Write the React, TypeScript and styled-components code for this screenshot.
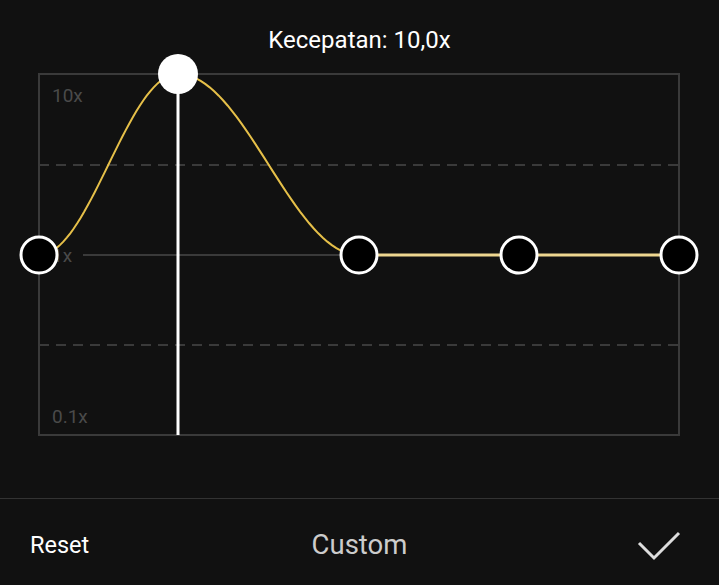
import React from "react";
import styled, { createGlobalStyle } from "styled-components";

const GlobalStyle = createGlobalStyle`
  html, body {
    margin: 0;
    padding: 0;
    background: #111111;
  }
  body {
    font-family: Roboto, "Liberation Sans", sans-serif;
    overflow: hidden;
  }
`;

const Screen = styled.div`
  width: 719px;
  height: 585px;
  display: flex;
  flex-direction: column;
  background: #111111;
`;

const Title = styled.div`
  height: 80px;
  display: flex;
  align-items: center;
  justify-content: center;
  color: #ffffff;
  font-size: 24px;
  position: relative;
  z-index: 1;
`;

const Chart = styled.svg`
  display: block;
  width: 719px;
  height: 418px;
  overflow: visible;
`;

const Divider = styled.div`
  height: 1px;
  background: #333333;
`;

const Footer = styled.div`
  flex: 1;
  display: grid;
  grid-template-columns: 1fr auto 1fr;
  align-items: center;
  padding: 5px 30px 0 30px;
`;

const ResetButton = styled.span`
  color: #ffffff;
  font-size: 23.5px;
`;

const PresetName = styled.span`
  color: #cccccc;
  font-size: 27.5px;
`;

const ConfirmButton = styled.span`
  justify-self: end;
  display: flex;
  margin: 2px 8px 0 0;
`;

const GRID = "#3a3a3a";
const LABEL = "#4a4a4a";
const CURVE = "#e6c049";
const FLAT = "#eed690";

const left = 39;
const right = 679;
const top = 74;
const bottom = 435;
const mid = 255;

// smooth cosine half-wave between two points
const wave = (x0: number, y0: number, x1: number, y1: number) => {
  const pts: string[] = [];
  for (let i = 0; i <= 40; i++) {
    const t = i / 40;
    const x = x0 + (x1 - x0) * t;
    const y = y0 + (y1 - y0) * (1 - Math.cos(Math.PI * t)) / 2;
    pts.push(`${x.toFixed(2)},${y.toFixed(2)}`);
  }
  return "M" + pts.join(" L");
};

const points = [
  { x: 39, y: mid },
  { x: 359, y: mid },
  { x: 519, y: mid },
  { x: 679, y: mid },
];

const SpeedChart = () => (
  <Chart viewBox="0 80 719 418">
    <rect x={left} y={top} width={right - left} height={bottom - top} fill="none" stroke={GRID} strokeWidth={2} />
    <line x1={left} y1={165} x2={right} y2={165} stroke={GRID} strokeWidth={2} strokeDasharray="10 7" />
    <line x1={left} y1={345} x2={right} y2={345} stroke={GRID} strokeWidth={2} strokeDasharray="10 7" />
    <line x1={83} y1={mid} x2={right} y2={mid} stroke={GRID} strokeWidth={2} />

    <text x={52} y={102} fill={LABEL} fontSize={19} fontFamily="Roboto, sans-serif">10x</text>
    <text x={52} y={262} fill={LABEL} fontSize={19} fontFamily="Roboto, sans-serif">1x</text>
    <text x={52} y={423} fill={LABEL} fontSize={19} fontFamily="Roboto, sans-serif">0.1x</text>

    <path d={wave(39, mid, 178, top)} fill="none" stroke={CURVE} strokeWidth={2} />
    <path d={wave(178, top, 359, mid)} fill="none" stroke={CURVE} strokeWidth={2} />
    <line x1={359} y1={mid} x2={679} y2={mid} stroke={FLAT} strokeWidth={3} />

    <line x1={178} y1={top} x2={178} y2={bottom} stroke="#ffffff" strokeWidth={3} />

    {points.map((p) => (
      <circle key={p.x} cx={p.x} cy={p.y} r={18} fill="#000000" stroke="#ffffff" strokeWidth={3} />
    ))}
    <circle cx={178} cy={top} r={20} fill="#ffffff" />
  </Chart>
);

const CheckIcon = () => (
  <svg width="44" height="30" viewBox="0 0 44 30">
    <path d="M2 12 L17 27 L42 2" fill="none" stroke="#dddddd" strokeWidth={3} />
  </svg>
);

export default function App() {
  return (
    <Screen>
      <GlobalStyle />
      <Title>Kecepatan: 10,0x</Title>
      <SpeedChart />
      <Divider />
      <Footer>
        <ResetButton>Reset</ResetButton>
        <PresetName>Custom</PresetName>
        <ConfirmButton>
          <CheckIcon />
        </ConfirmButton>
      </Footer>
    </Screen>
  );
}
